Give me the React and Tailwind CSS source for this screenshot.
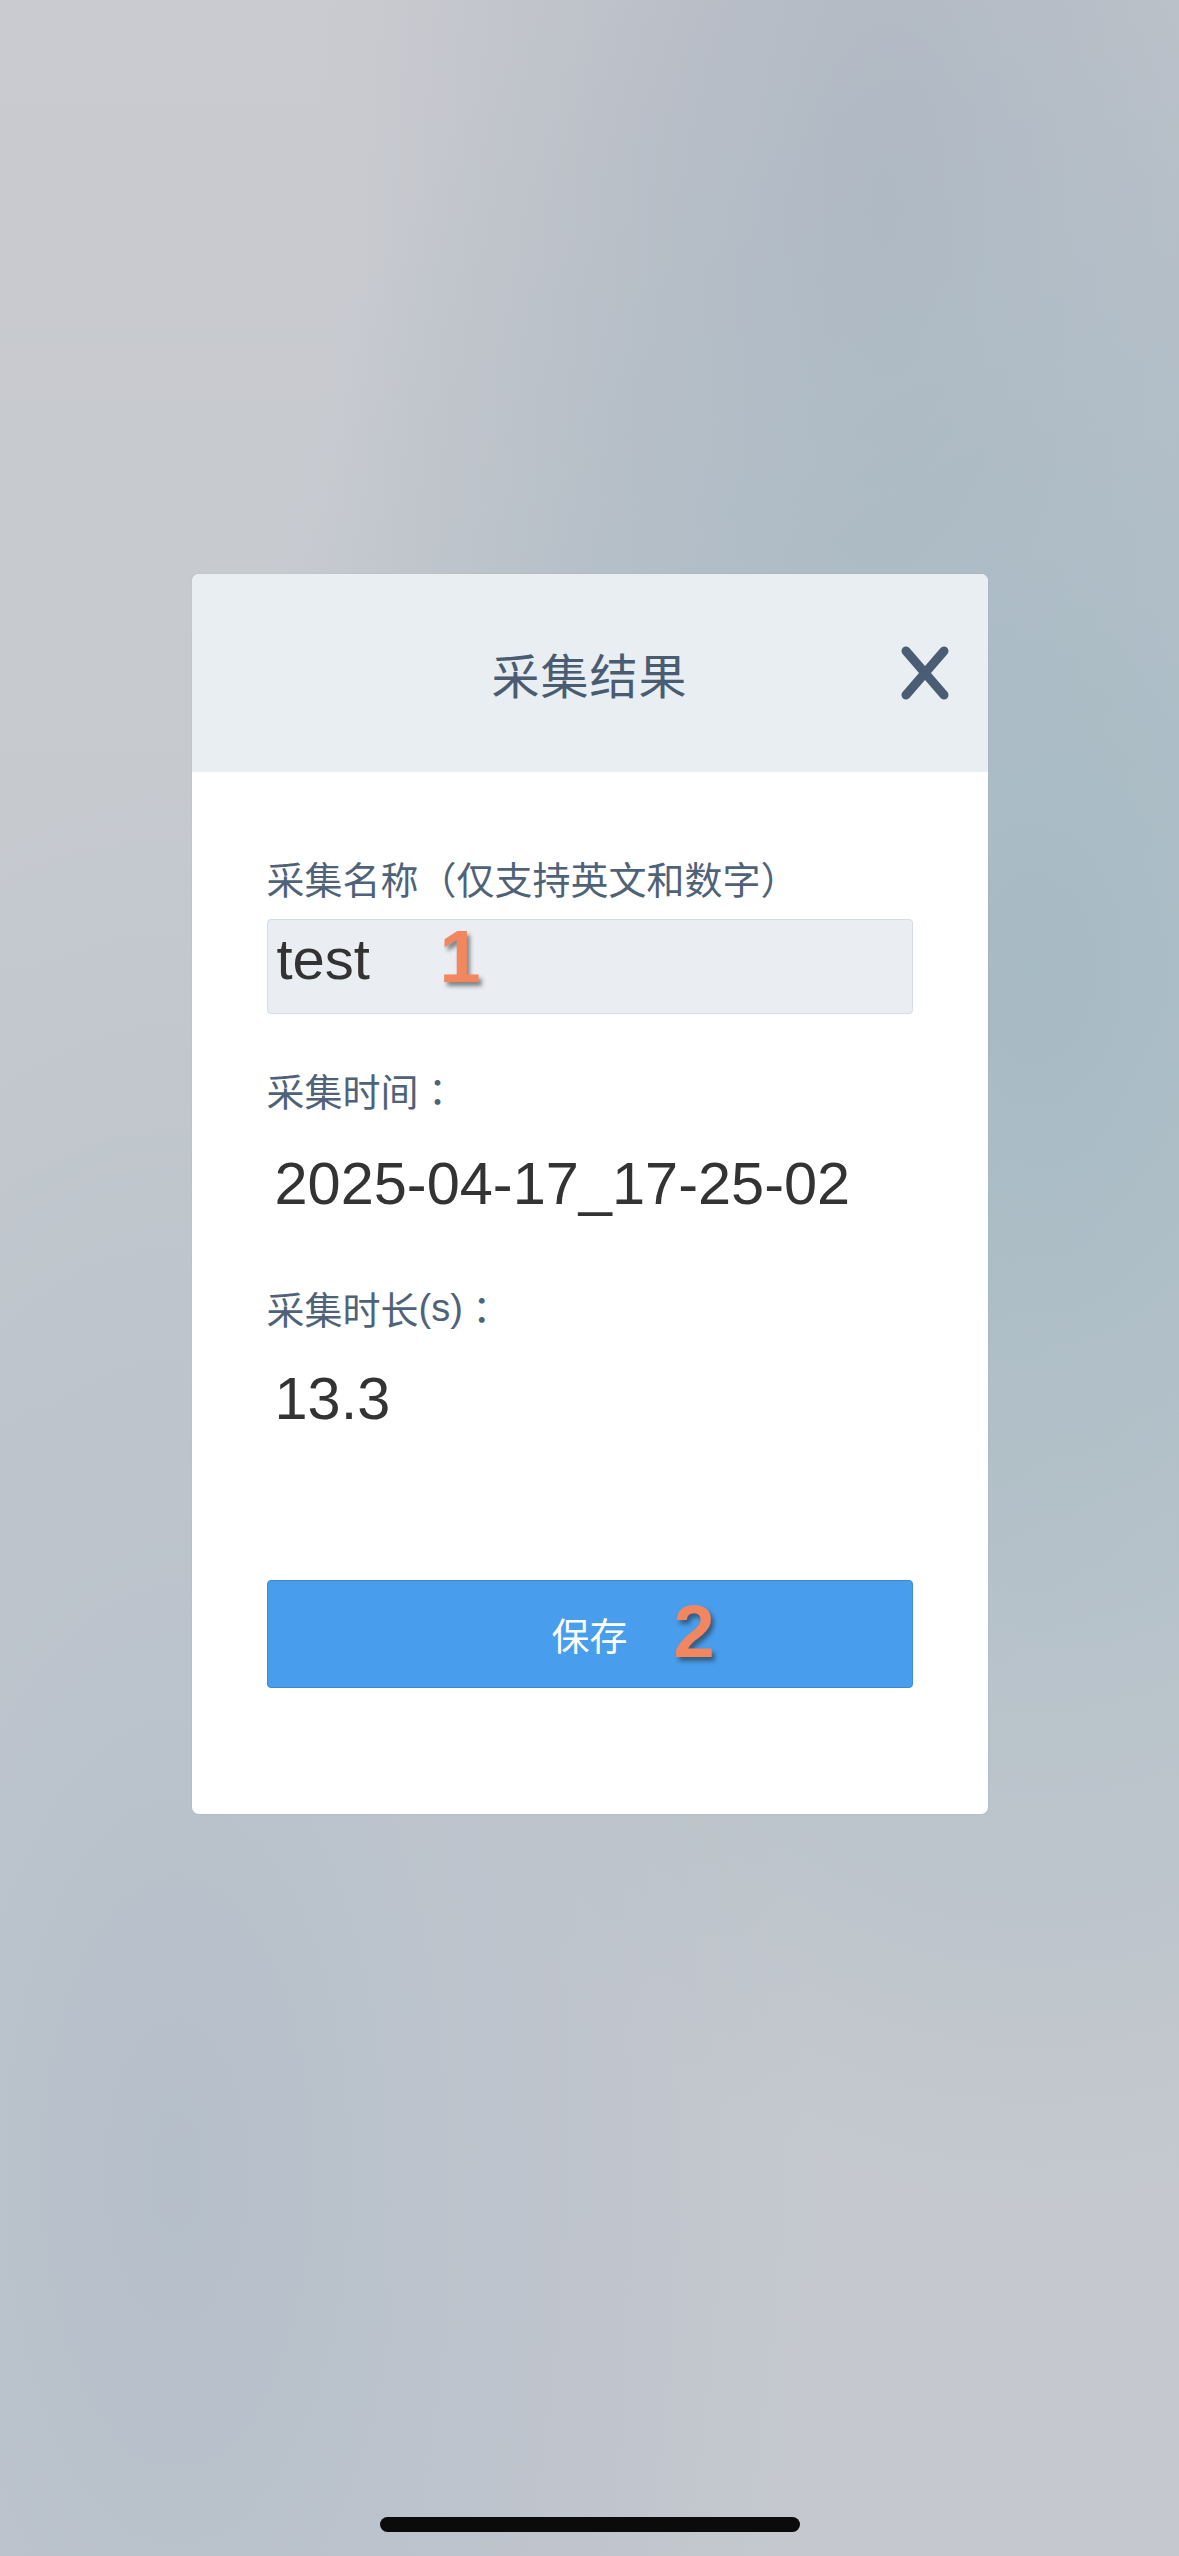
export default function App() {
  const labelCls =
    "flex items-center h-[50px] text-[38px] leading-[50px] text-[#4f6278] font-['Noto_Sans_CJK_SC',sans-serif]";
  const valueCls =
    "pl-[8px] text-[59.5px] leading-[58px] text-[#333333] font-['Liberation_Sans',Arial,sans-serif]";
  const badgeCls =
    "absolute text-[74px] leading-none font-bold text-[#f2865f] font-['Liberation_Sans',Arial,sans-serif] [text-shadow:3px_4px_4px_rgba(40,40,40,0.55)]";
  const colon = (
    <span className="font-['Noto_Sans_CJK_TC',sans-serif]">：</span>
  );

  return (
    <div className="relative w-[1179px] h-[2556px] overflow-hidden flex flex-col items-center bg-[radial-gradient(ellipse_at_88%_38%,#a7bbc5_0%,transparent_55%),radial-gradient(ellipse_at_15%_85%,#b5bfca_0%,transparent_45%),radial-gradient(ellipse_at_75%_8%,#b3b8c3_0%,transparent_45%),linear-gradient(180deg,#cacbd0_0%,#c4c9ce_45%,#c5c8cf_100%)]">
      {/* dialog */}
      <div className="mt-[574px] w-[796px] rounded-[7px] bg-white overflow-hidden shadow-[0_0_2px_rgba(0,0,0,0.08)]">
        {/* header */}
        <div className="relative h-[198px] bg-[#e9eef2] flex items-center justify-center">
          <span className="text-[48px] leading-none text-[#4a5c72] font-['Noto_Sans_CJK_SC',sans-serif] tracking-[1px]">
            采集结果
          </span>
          <button className="absolute right-[36px] top-[70px] w-[54px] h-[58px] flex items-center justify-center">
            <svg width="50" height="56" viewBox="0 0 50 56" fill="none">
              <path
                d="M6 6 L44 50 M44 6 L6 50"
                stroke="#4a5d74"
                strokeWidth="9"
                strokeLinecap="round"
              />
            </svg>
          </button>
        </div>

        {/* body */}
        <div className="px-[75px] pt-[81px] pb-[126px] flex flex-col">
          <div className={labelCls}>采集名称（仅支持英文和数字）</div>

          <div className="relative mt-[16px] h-[95px] rounded-[4px] border border-[#d6dce4] bg-[#eaeef3] pl-[9px] pt-[10px]">
            <div className="text-[58px] leading-[58px] text-[#333333] font-['Liberation_Sans',Arial,sans-serif]">
              test
            </div>
            <span className={badgeCls + " left-[172px] top-[0px]"}>1</span>
          </div>

          <div className={labelCls + " mt-[51px]"}>
            <span>采集时间</span>
            {colon}
          </div>
          <div className={valueCls + " mt-[40px]"}>2025-04-17_17-25-02</div>

          <div className={labelCls + " mt-[70px]"}>
            <span>采集时长</span>
            <span className="font-['Liberation_Sans',Arial,sans-serif]">(s)</span>
            {colon}
          </div>
          <div className={valueCls + " mt-[37px]"}>13.3</div>

          <button className="relative mt-[152px] h-[108px] w-full rounded-[4px] border border-[#3d89d2] bg-[#489ded] flex items-center justify-center">
            <span className="text-[38px] leading-none text-white font-['Noto_Sans_CJK_SC',sans-serif]">
              保存
            </span>
            <span className={badgeCls + " left-[406px] top-[14px]"}>2</span>
          </button>
        </div>
      </div>

      {/* home indicator */}
      <div className="mt-auto mb-[24px] w-[420px] h-[15px] rounded-full bg-[#0b0b0b]" />
    </div>
  );
}
